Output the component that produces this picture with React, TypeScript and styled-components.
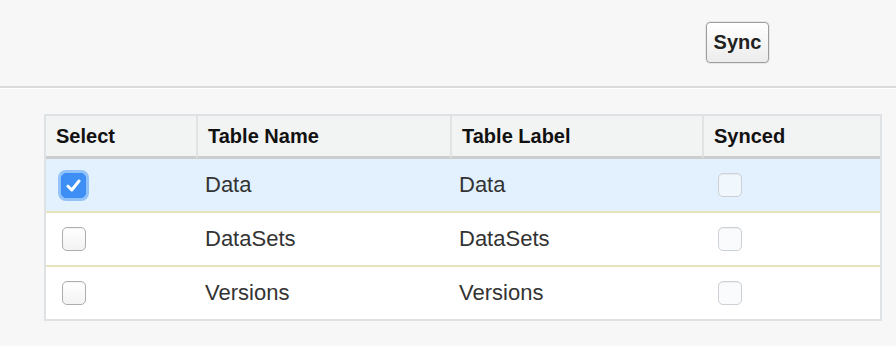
import React from 'react'
import styled, { createGlobalStyle } from 'styled-components'

const GlobalStyle = createGlobalStyle`
    html, body {
        margin: 0;
        padding: 0;
        background: #f7f7f7;
        font-family: "Liberation Sans", Arial, Helvetica, sans-serif;
    }
`

const Toolbar = styled.div`
    height: 88px;
    display: flex;
    justify-content: flex-end;
    align-items: flex-start;
    padding: 22px 127px 0 0;
    box-sizing: border-box;
    border-bottom: 2px solid #dadada;
    box-shadow: 0 1px 0 #ffffff;
`

const SyncButton = styled.button`
    width: 63px;
    height: 41px;
    border: 1px solid #9d9d9d;
    border-radius: 4px;
    background: linear-gradient(#ffffff, #ececec);
    box-shadow: 0 0 0 1px rgba(0, 0, 0, 0.06);
    font-family: inherit;
    font-size: 20px;
    font-weight: bold;
    color: #222;
    padding: 0;
    cursor: pointer;
`

const Content = styled.div`
    padding: 26px 14px 24px 44px;
`

const Table = styled.table`
    width: 838px;
    border-collapse: separate;
    border-spacing: 0;
    border: 2px solid #dfe2e5;
    background: #ffffff;
    table-layout: fixed;
`

const HeadCell = styled.th<{ $width: number }>`
    width: ${p => p.$width}px;
    height: 43px;
    padding: 1px 0 0 10px;
    box-sizing: border-box;
    text-align: left;
    font-size: 20px;
    font-weight: bold;
    color: #111;
    background: #f2f3f3;
    border-bottom: 3px solid #cdcdcd;
    border-left: 2px solid #e0e2e4;
    &:first-child {
        border-left: none;
    }
`

const Row = styled.tr<{ $selected?: boolean }>`
    background: ${p => (p.$selected ? '#e2f1fd' : '#ffffff')};
    & > td {
        height: 54px;
        border-bottom: 2px solid #e8e2bd;
    }
    &:last-child > td {
        height: 52px;
        border-bottom: none;
    }
`

const Cell = styled.td<{ $pad?: number }>`
    box-sizing: border-box;
    padding: 0 0 0 ${p => (p.$pad !== undefined ? p.$pad : 9)}px;
    font-size: 22px;
    color: #333;
    vertical-align: middle;
`

const Box = styled.span<{ $checked?: boolean; $disabled?: boolean }>`
    display: flex;
    flex-shrink: 0;
    align-items: center;
    justify-content: center;
    width: ${p => (p.$checked ? 25 : 24)}px;
    height: ${p => (p.$checked ? 25 : 24)}px;
    margin-left: ${p => (p.$checked ? -1 : 0)}px;
    box-sizing: border-box;
    border-radius: 5px;
    border: 1px solid ${p => (p.$checked ? '#3b8cf3' : p.$disabled ? '#cdd0d4' : '#aeaeae')};
    background: ${p =>
        p.$checked
            ? '#3d8ff6'
            : p.$disabled
            ? 'rgba(246, 249, 252, 0.7)'
            : 'linear-gradient(#ffffff, #f3f3f3)'};
    box-shadow: ${p =>
        p.$checked ? '0 0 0 3px rgba(80, 155, 248, 0.55)' : 'inset 0 1px 1px rgba(0,0,0,0.05)'};
`

interface CheckboxProps {
    checked?: boolean;
    disabled?: boolean;
}

const Checkbox: React.FunctionComponent<CheckboxProps> = ({ checked, disabled }) => (
    <Box $checked={checked} $disabled={disabled}>
        {checked && (
            <svg width="15" height="13" viewBox="0 0 15 13">
                <path d="M2 7.2 L5.8 11 L13 2" fill="none" stroke="#ffffff" strokeWidth="3" strokeLinecap="round" strokeLinejoin="round" />
            </svg>
        )}
    </Box>
)

const rows = [
    { name: 'Data', label: 'Data', selected: true },
    { name: 'DataSets', label: 'DataSets', selected: false },
    { name: 'Versions', label: 'Versions', selected: false },
]

const App: React.FunctionComponent = () => {
    return (
        <>
            <GlobalStyle />
            <Toolbar>
                <SyncButton>Sync</SyncButton>
            </Toolbar>
            <Content>
                <Table>
                    <thead>
                        <tr>
                            <HeadCell $width={150}>Select</HeadCell>
                            <HeadCell $width={254}>Table Name</HeadCell>
                            <HeadCell $width={252}>Table Label</HeadCell>
                            <HeadCell $width={178}>Synced</HeadCell>
                        </tr>
                    </thead>
                    <tbody>
                        {rows.map(r => (
                            <Row key={r.name} $selected={r.selected}>
                                <Cell $pad={16}>
                                    <Checkbox checked={r.selected} />
                                </Cell>
                                <Cell>{r.name}</Cell>
                                <Cell>{r.label}</Cell>
                                <Cell $pad={16}>
                                    <Checkbox disabled />
                                </Cell>
                            </Row>
                        ))}
                    </tbody>
                </Table>
            </Content>
        </>
    )
}

export default App
